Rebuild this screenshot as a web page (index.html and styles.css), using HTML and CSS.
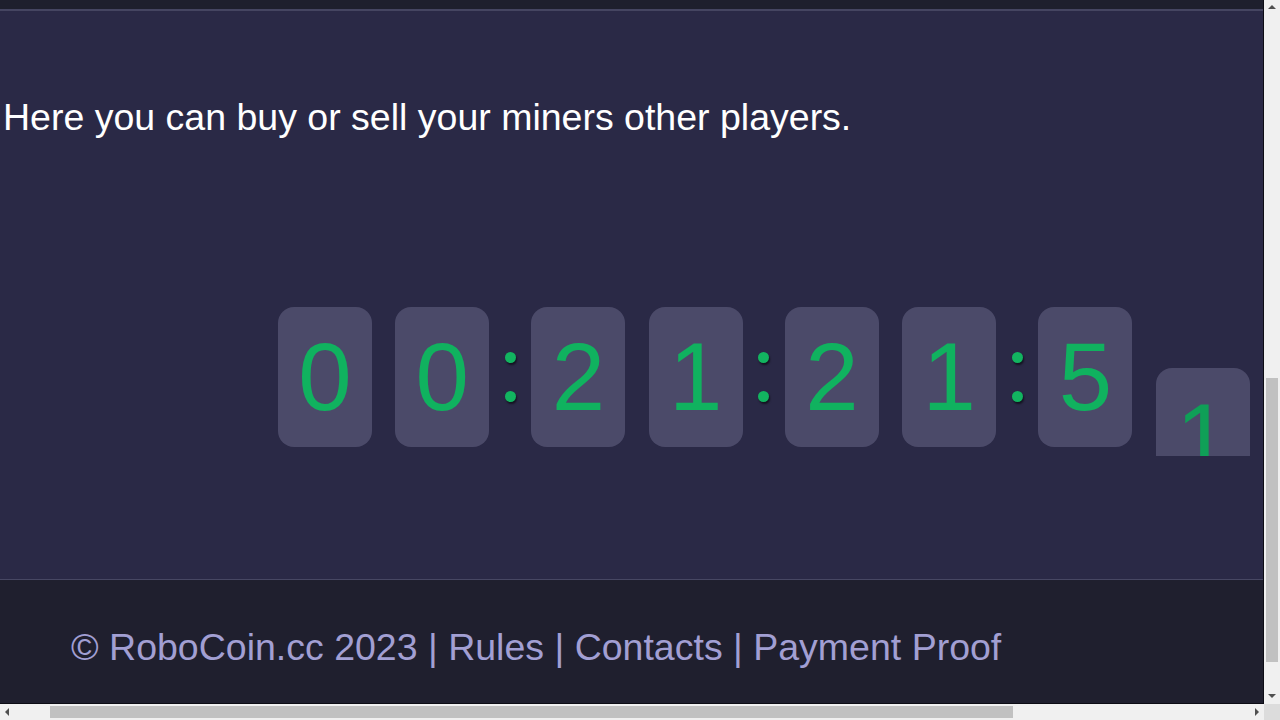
FILE: index.html
```html
<!DOCTYPE html>
<html lang="en">
<head>
<meta charset="utf-8">
<title>RoboCoin Market</title>
<link rel="stylesheet" href="styles.css">
</head>
<body>
<div class="window">
  <div class="page">
    <div class="topbar"></div>
    <main class="content">
      <p class="intro">Here you can buy or sell your miners other players.</p>
      <div class="countdown">
        <div class="group">
          <div class="card">0</div>
          <div class="card">0</div>
        </div>
        <div class="sep"><span class="dot"></span><span class="dot"></span></div>
        <div class="group">
          <div class="card">2</div>
          <div class="card">1</div>
        </div>
        <div class="sep"><span class="dot"></span><span class="dot"></span></div>
        <div class="group">
          <div class="card">2</div>
          <div class="card">1</div>
        </div>
        <div class="sep"><span class="dot"></span><span class="dot"></span></div>
        <div class="group">
          <div class="card">5</div>
          <div class="flip">
            <div class="card card-dropping">1</div>
          </div>
        </div>
      </div>
    </main>
    <footer class="footer">
      <p class="footer-text">© RoboCoin.cc 2023 | <a href="#">Rules</a> | <a href="#">Contacts</a> | <a href="#">Payment Proof</a></p>
    </footer>
  </div>
  <div class="vscroll">
    <span class="arrow arrow-up"></span>
    <span class="vtrack"><span class="vthumb"></span></span>
    <span class="arrow arrow-down"></span>
  </div>
  <div class="hscroll">
    <span class="arrow arrow-left"></span>
    <span class="htrack"><span class="hthumb"></span></span>
    <span class="arrow arrow-right"></span>
  </div>
  <div class="corner"></div>
</div>
</body>
</html>
```

FILE: styles.css
```css
* { box-sizing: border-box; }

html, body {
  margin: 0;
  padding: 0;
  width: 1280px;
  height: 720px;
  overflow: hidden;
  background: #f0f0f0;
  font-family: "Liberation Sans", Arial, sans-serif;
}

.window {
  display: grid;
  grid-template-columns: 1264px 16px;
  grid-template-rows: 704px 16px;
  width: 1280px;
  height: 720px;
}

.page {
  display: flex;
  flex-direction: column;
  background: #2a2946;
  border-right: 1px solid #0c0c14;
  border-bottom: 1px solid #0c0c14;
  overflow: hidden;
}

.topbar {
  height: 11px;
  flex: none;
  background: #1e1f2d;
  border-bottom: 2px solid #454561;
}

.content {
  height: 568px;
  flex: none;
  display: flex;
  flex-direction: column;
  background: #2a2946;
}

.intro {
  margin: 0;
  padding: 85px 0 0 3px;
  color: #ffffff;
  font-size: 37.5px;
  line-height: 42px;
  white-space: nowrap;
}

.countdown {
  display: flex;
  align-items: flex-start;
  padding-left: 278px;
  margin-top: 169px;
}

.group {
  display: flex;
  gap: 23.3px;
  align-items: flex-start;
}

.card {
  width: 94px;
  height: 140px;
  border-radius: 16px;
  background: #4b4a69;
  color: #10b25f;
  font-size: 96px;
  line-height: 140px;
  text-align: center;
  flex: none;
}

.flip {
  height: 149px;
  overflow: hidden;
}

.card-dropping {
  margin-top: 61px;
  color: #0f9f57;
}

.sep {
  width: 42.2px;
  height: 140px;
  display: flex;
  flex-direction: column;
  align-items: center;
  justify-content: center;
  gap: 28px;
  padding-bottom: 1px;
}

.dot {
  width: 11px;
  height: 11px;
  border-radius: 50%;
  background: #12b460;
  box-shadow: 1px 2px 2px rgba(0, 0, 0, 0.55);
}

.footer {
  flex: 1;
  background: #1f1f2e;
  border-top: 1px solid #474763;
  display: flex;
  align-items: flex-start;
}

.footer-text {
  margin: 0;
  padding: 45px 0 0 71px;
  color: #a29fd3;
  font-size: 37.5px;
  line-height: 44px;
  white-space: nowrap;
}

.footer-text a {
  color: inherit;
  text-decoration: none;
}

/* scrollbars */
.vscroll {
  display: flex;
  flex-direction: column;
  align-items: center;
  background: #f0f0f0;
}

.vtrack {
  flex: 1;
  width: 100%;
  display: flex;
  flex-direction: column;
  align-items: center;
}

.vthumb {
  width: 12px;
  height: 284px;
  margin-top: 362px;
  background: #c1c1c1;
}

.hscroll {
  display: flex;
  align-items: center;
  background: #f0f0f0;
}

.htrack {
  flex: 1;
  height: 100%;
  display: flex;
  align-items: center;
}

.hthumb {
  height: 12px;
  width: 963px;
  margin-left: 34px;
  background: #c1c1c1;
}

.corner {
  background: #dcdcdc;
}

.arrow {
  flex: none;
  width: 16px;
  height: 16px;
  position: relative;
}

.arrow::after {
  content: "";
  position: absolute;
  width: 0;
  height: 0;
}

.arrow-up::after {
  left: 4px;
  top: 5px;
  border-left: 4px solid transparent;
  border-right: 4px solid transparent;
  border-bottom: 4px solid #505050;
}

.arrow-down::after {
  left: 4px;
  top: 6px;
  border-left: 4px solid transparent;
  border-right: 4px solid transparent;
  border-top: 4px solid #505050;
}

.arrow-left::after {
  left: 5px;
  top: 4px;
  border-top: 4px solid transparent;
  border-bottom: 4px solid transparent;
  border-right: 4px solid #505050;
}

.arrow-right::after {
  left: 7px;
  top: 4px;
  border-top: 4px solid transparent;
  border-bottom: 4px solid transparent;
  border-left: 4px solid #505050;
}
```
